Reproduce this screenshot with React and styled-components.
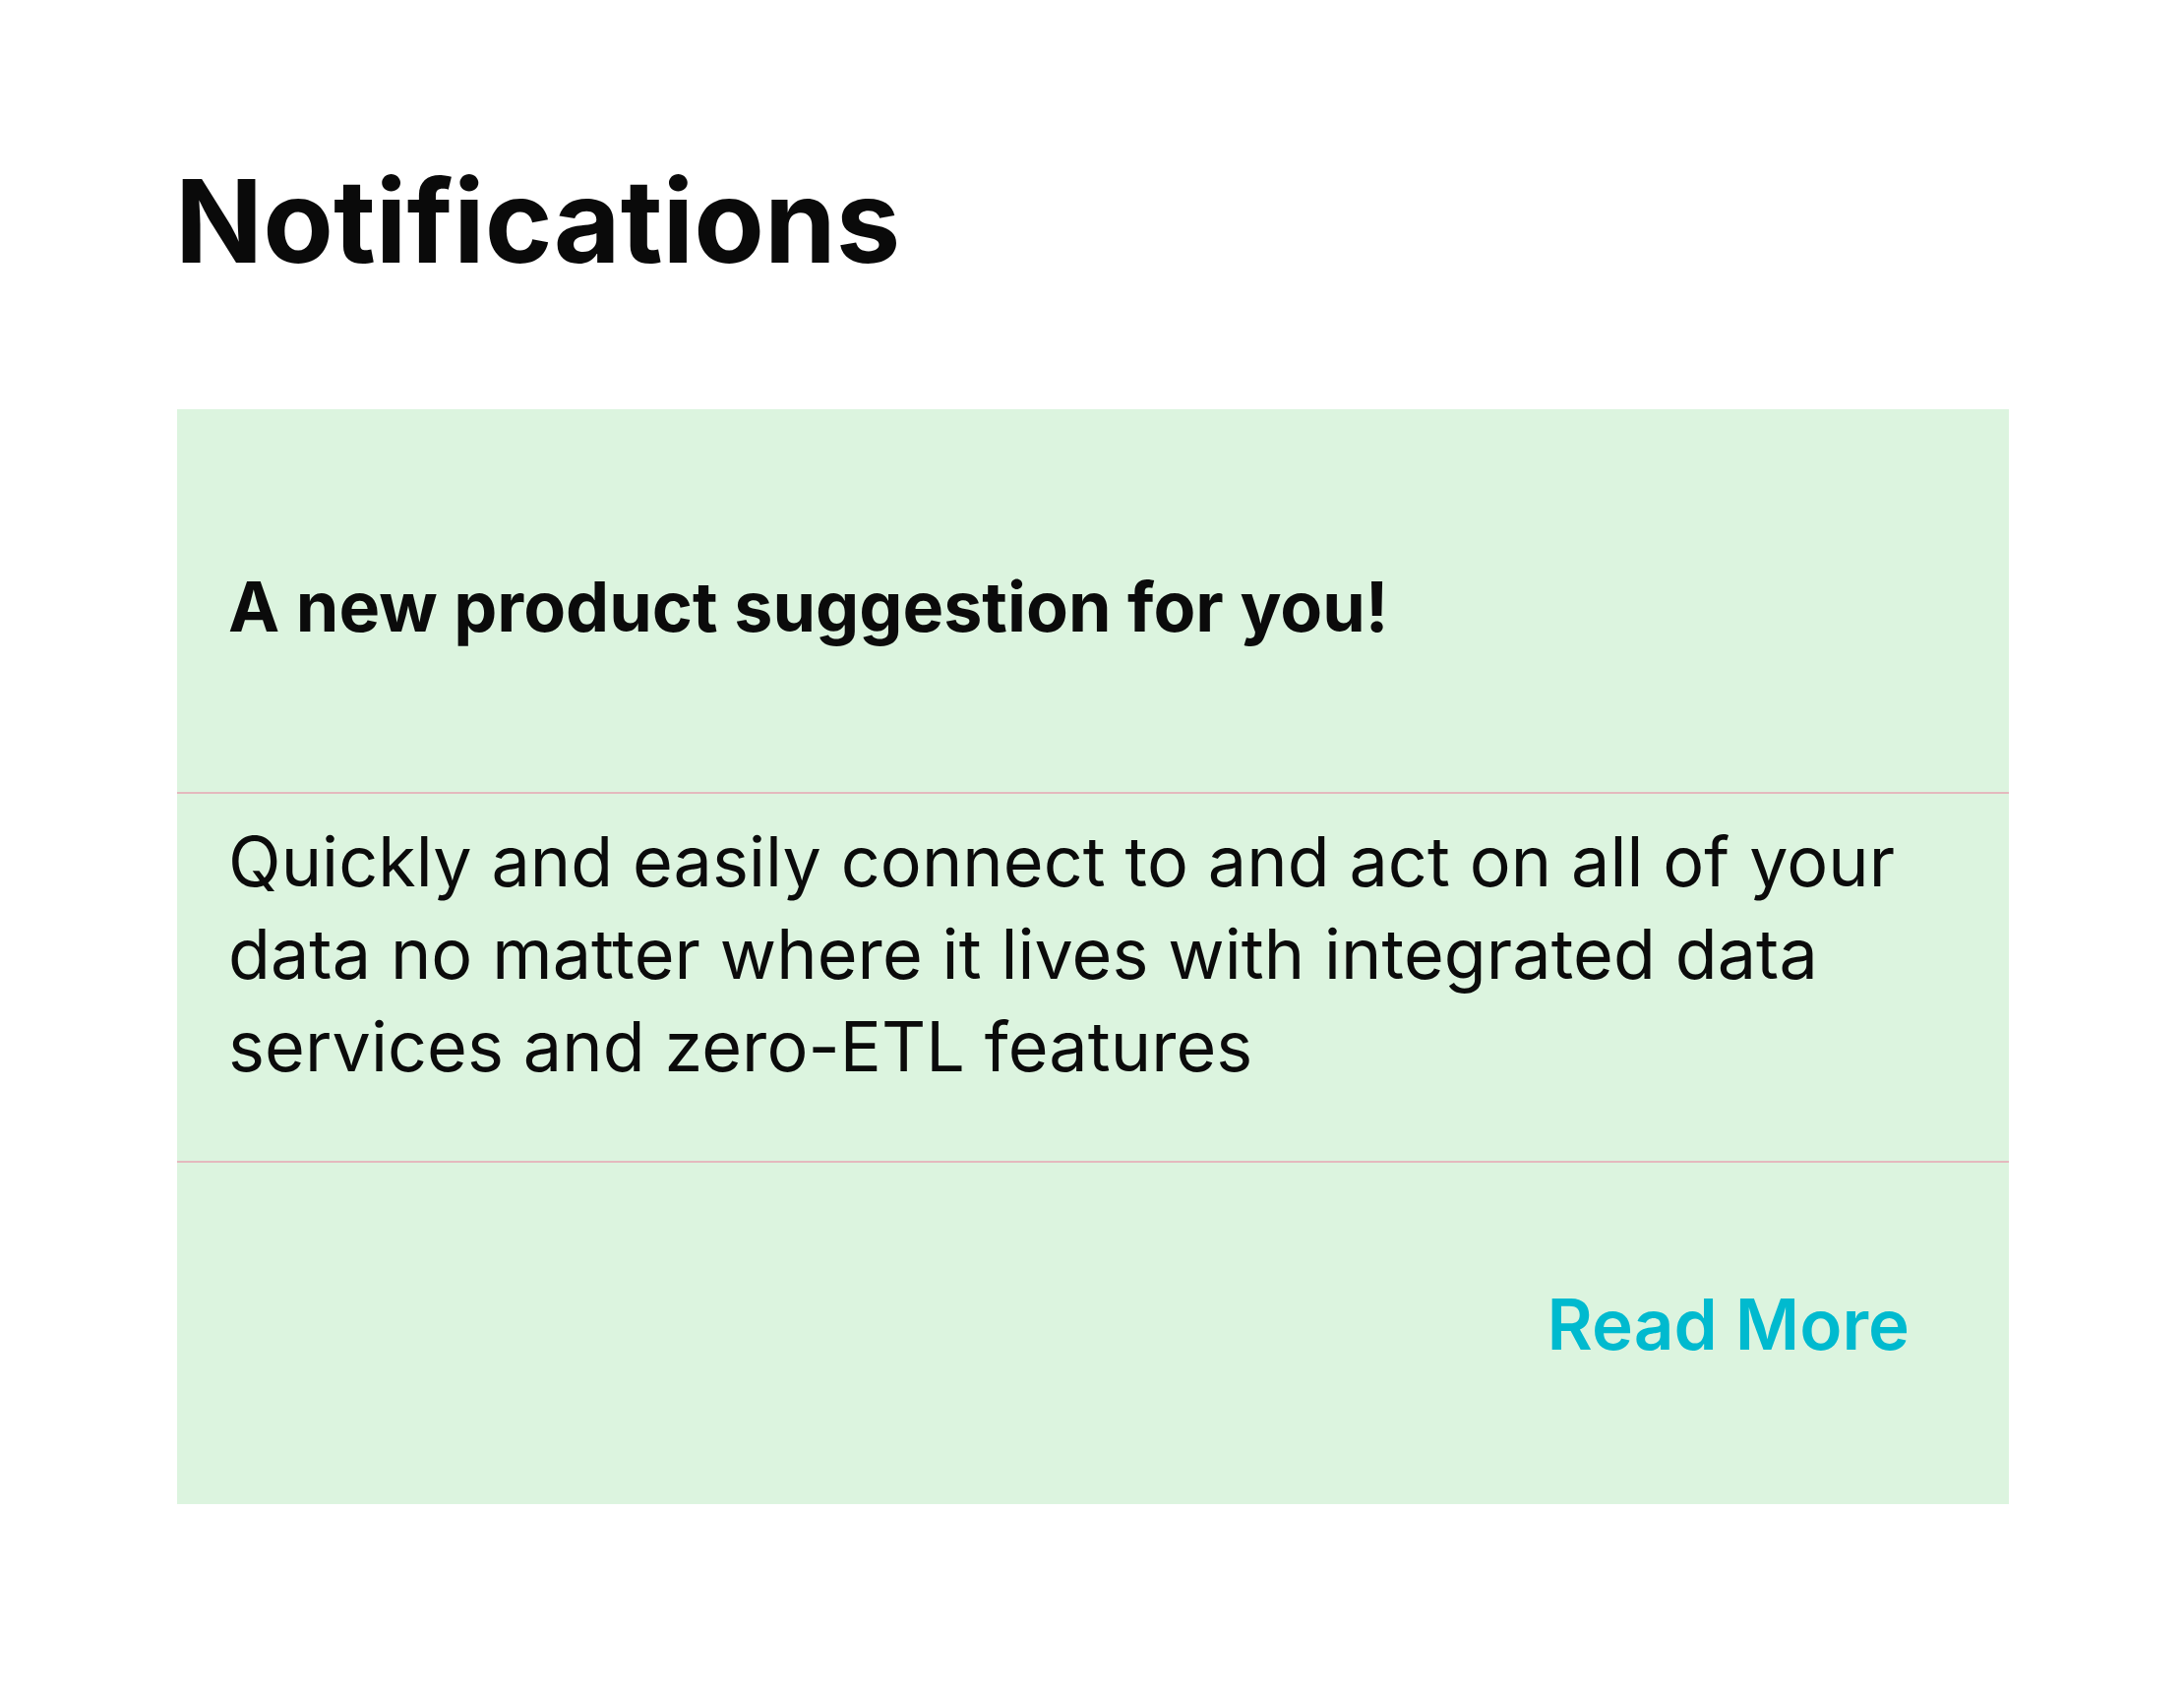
import React from "react";
import styled, { createGlobalStyle } from "styled-components";

const GlobalStyle = createGlobalStyle`
  html, body {
    margin: 0;
    padding: 0;
    background: #ffffff;
  }
  body {
    font-family: Inter, "Noto Sans", "Liberation Sans", sans-serif;
    color: #0b0b0b;
  }
`;

const Page = styled.main`
  padding: 155px 178px 190px 179px;
  display: flex;
  flex-direction: column;
  gap: 121px;
`;

const PageTitle = styled.h1`
  margin: 0 0 0 -1px;
  font-size: 117px;
  line-height: 140px;
  font-weight: 700;
  color: #0a0a0a;
`;

const Card = styled.section`
  margin-left: 1px;
  background: #dcf4df;
  display: flex;
  flex-direction: column;
`;

const CardPart = styled.div`
  display: flex;
  box-sizing: border-box;
  padding: 0 52px;
  & + & {
    border-top: 2px solid #e4b9be;
  }
`;

const CardHeader = styled(CardPart)`
  align-items: center;
  min-height: 389px;
  padding-top: 12px;
`;

const CardBody = styled(CardPart)`
  align-items: flex-start;
  min-height: 375px;
  padding-top: 22px;
`;

const CardFooter = styled(CardPart)`
  align-items: center;
  justify-content: flex-end;
  min-height: 349px;
  padding-right: 101px;
  padding-bottom: 20px;
`;

const CardHeading = styled.h2`
  margin: 0;
  font-size: 70px;
  line-height: 86px;
  font-weight: 700;
`;

const CardText = styled.p`
  margin: 0;
  font-size: 70px;
  line-height: 94px;
  font-weight: 400;
  letter-spacing: 0.1px;
`;

const ReadMore = styled.a`
  font-size: 71px;
  font-weight: 600;
  color: #00bacf;
  text-decoration: none;
  cursor: pointer;
`;

export default function App() {
  return (
    <>
      <GlobalStyle />
      <Page>
        <PageTitle>Notifications</PageTitle>
        <Card>
          <CardHeader>
            <CardHeading>A new product suggestion for you!</CardHeading>
          </CardHeader>
          <CardBody>
            <CardText>
              Quickly and easily connect to and act on all of your data no
              matter where it lives with integrated data services and zero-ETL
              features
            </CardText>
          </CardBody>
          <CardFooter>
            <ReadMore>Read More</ReadMore>
          </CardFooter>
        </Card>
      </Page>
    </>
  );
}
